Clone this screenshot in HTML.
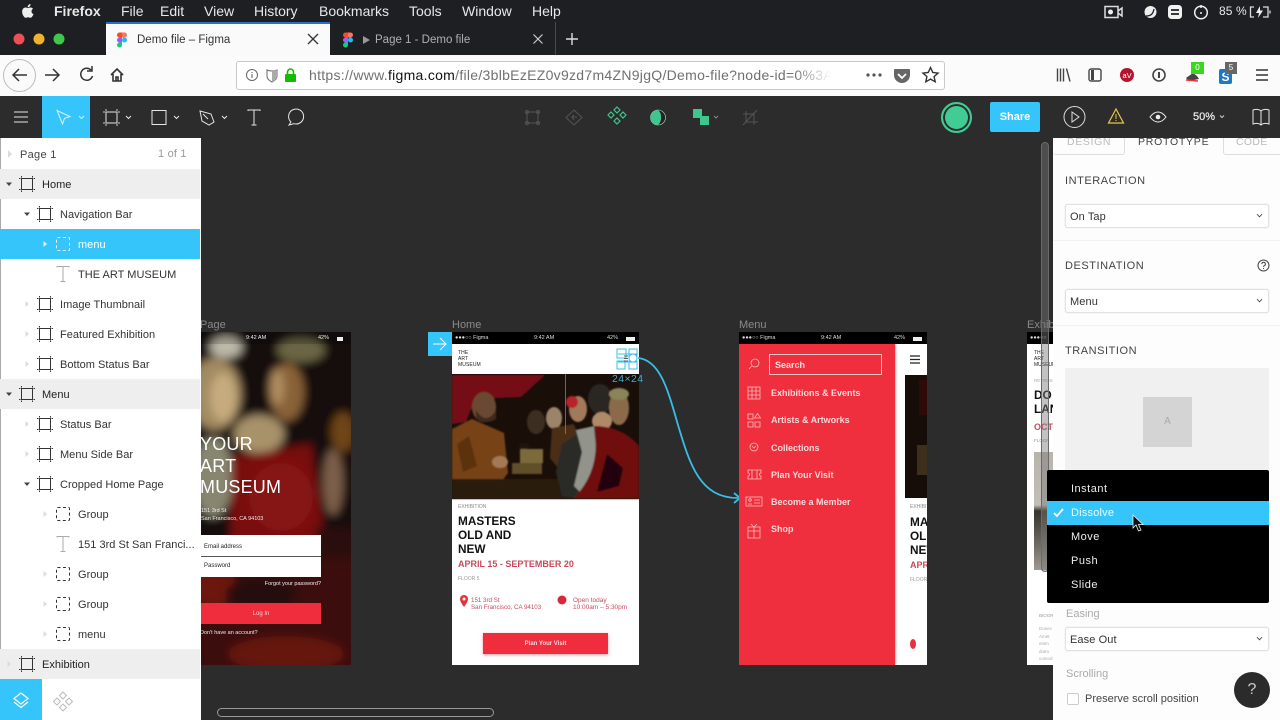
<!DOCTYPE html>
<html><head><meta charset="utf-8"><style>
*{box-sizing:border-box;margin:0;padding:0}
html,body{width:1280px;height:720px;overflow:hidden;background:#2c2c2c;font-family:"Liberation Sans",sans-serif}
.a{position:absolute;white-space:nowrap}
svg{position:absolute;overflow:visible}
.r{position:absolute;left:0;width:200px;height:30px;font-size:11px;letter-spacing:.02px;line-height:32px;color:#333;white-space:nowrap}
.r span{position:absolute}
.h{background:#eeeeef;color:#222}
.m{position:absolute;font-size:14px;color:#e8e8e8;top:3px}
.lab{position:absolute;font-size:11px;color:#8a8a8a;top:319px}
.sec{position:absolute;left:1065px;font-size:11px;letter-spacing:.55px;color:#444}
.sel{position:absolute;left:1065px;width:204px;height:24px;border:1px solid #e2e2e2;border-radius:3px;background:#fff;font-size:11px;letter-spacing:.1px;line-height:24px;padding-left:4px;color:#333;box-shadow:0 0 1px #ccc}
.sel i{position:absolute;right:6px;top:7px;width:5px;height:5px;border-right:1px solid #444;border-bottom:1px solid #444;transform:rotate(45deg) scale(.8)}
.it{position:absolute;left:1071px;font-size:11px;letter-spacing:.5px;color:#eee}
.t{position:absolute;white-space:nowrap;font-family:"Liberation Sans",sans-serif}
</style></head><body>
<!-- macOS menu -->
<div class="a" style="left:0;top:0;width:1280px;height:55px;background:#1e1f23"></div>
<svg style="left:21px;top:3px" width="14" height="16" viewBox="0 0 14 16"><path d="M10.5 8.4c0-1.7 1.4-2.5 1.5-2.6-.8-1.2-2-1.3-2.5-1.3-1-.1-2 .6-2.6.6s-1.400-.6-2.300-.6C3.400 4.500 2.300 5.200 1.700 6.200.5 8.300 1.400 11.400 2.600 13.100c.6.800 1.300 1.800 2.200 1.700.9 0 1.200-.6 2.300-.6s1.400.6 2.300.6 1.600-.8 2.100-1.700c.7-1 1-1.900 1-2-.1 0-2-.7-2-2.700zM8.800 3.300c.5-.6.800-1.400.7-2.300-.7 0-1.600.5-2.100 1.100-.5.5-.9 1.400-.8 2.200.8.100 1.700-.4 2.200-1z" fill="#eee"/></svg>
<div class="m" style="left:54px;font-weight:bold">Firefox</div>
<div class="m" style="left:121px">File</div>
<div class="m" style="left:160px">Edit</div>
<div class="m" style="left:204px">View</div>
<div class="m" style="left:254px">History</div>
<div class="m" style="left:319px">Bookmarks</div>
<div class="m" style="left:409px">Tools</div>
<div class="m" style="left:462px">Window</div>
<div class="m" style="left:532px">Help</div>
<svg style="left:1100px;top:4px" width="170" height="16" viewBox="0 0 170 16" fill="none">
<rect x="5" y="2.500" width="13" height="11" stroke="#ddd" stroke-width="1.500"/><circle cx="10.500" cy="8" r="2.500" fill="#eee"/><path d="M18 7l4-3v8l-4-3" stroke="#ddd" stroke-width="1.500"/>
<circle cx="50.500" cy="8" r="6" fill="#eee"/><path d="M46 12c5 0 7-2 8-7" stroke="#1e1f23" stroke-width="1.300"/>
<rect x="68" y="1" width="14" height="14" rx="3.500" fill="#f2f2f2"/><path d="M71 6h8M71 10h8" stroke="#1e1f23" stroke-width="1.800"/>
<circle cx="101" cy="8.500" r="6.300" stroke="#eee" stroke-width="1.500"/><path d="M101 1v3" stroke="#eee" stroke-width="1.500"/><circle cx="101" cy="9" r="1" fill="#eee"/>
</svg>
<div class="a" style="left:1219px;top:4px;font-size:12px;color:#e8e8e8;letter-spacing:.1px">85 %</div>
<svg style="left:1249px;top:5px" width="24" height="14" viewBox="0 0 24 14" fill="none"><path d="M5 2H1.500v10H5M14 2h5v10h-5M21 5.500v3" stroke="#ddd" stroke-width="1.300"/><path d="M11 1L7 8h3l-1 5 5-7.500h-3z" fill="#eee"/></svg>
<!-- tabs -->
<svg style="left:0;top:0" width="80" height="55"><circle cx="19" cy="39" r="5.500" fill="#ec4f57"/><circle cx="39" cy="39" r="5.500" fill="#f2b32c"/><circle cx="59" cy="39" r="5.500" fill="#3ec94c"/></svg>
<div class="a" style="left:106px;top:22px;width:224px;height:33px;background:#fafafa;border-top:2px solid #2a6fc4"></div>
<svg style="left:117px;top:32px" width="10" height="16" viewBox="0 0 10 15"><path d="M2.500 0H5v5H2.500a2.500 2.500 0 0 1 0-5z" fill="#f24e1e"/><path d="M5 0h2.500a2.500 2.500 0 0 1 0 5H5z" fill="#ff7262"/><path d="M2.500 5H5v5H2.500a2.500 2.500 0 0 1 0-5z" fill="#a259ff"/><circle cx="7.500" cy="7.500" r="2.500" fill="#1abcfe"/><path d="M2.500 10H5v2.500a2.500 2.500 0 1 1-2.500-2.500z" fill="#0acf83"/></svg>
<div class="a" style="left:137px;top:34px;font-size:11.500px;color:#333">Demo file – Figma</div>
<svg style="left:307px;top:33px" width="12" height="12"><path d="M1 1l10 10M11 1L1 11" stroke="#333" stroke-width="1.300"/></svg>
<svg style="left:343px;top:32px" width="10" height="16" viewBox="0 0 10 15"><path d="M2.500 0H5v5H2.500a2.500 2.500 0 0 1 0-5z" fill="#f24e1e"/><path d="M5 0h2.500a2.500 2.500 0 0 1 0 5H5z" fill="#ff7262"/><path d="M2.500 5H5v5H2.500a2.500 2.500 0 0 1 0-5z" fill="#a259ff"/><circle cx="7.500" cy="7.500" r="2.500" fill="#1abcfe"/><path d="M2.500 10H5v2.500a2.500 2.500 0 1 1-2.500-2.500z" fill="#0acf83"/></svg>
<svg style="left:363px;top:36px" width="8" height="8"><path d="M0 0l7 4-7 4z" fill="#999"/></svg>
<div class="a" style="left:375px;top:34px;font-size:11.500px;color:#b0b0b0">Page 1 - Demo file</div>
<svg style="left:533px;top:34px" width="10" height="10"><path d="M.5.5l9 9M9.500.5l-9 9" stroke="#ccc" stroke-width="1.200"/></svg>
<div class="a" style="left:555px;top:22px;width:1px;height:33px;background:#4a4a4a"></div>
<svg style="left:565px;top:32px" width="14" height="14"><path d="M7 1v12M1 7h12" stroke="#ddd" stroke-width="1.400"/></svg>
<!-- nav bar -->
<div class="a" style="left:0;top:55px;width:1280px;height:41px;background:#fbfbfb"></div>
<div class="a" style="left:3px;top:59px;width:33px;height:33px;border:1px solid #bbb;border-radius:50%;background:#fafafa"></div>
<svg style="left:0;top:55px" width="130" height="41" fill="none" stroke="#333" stroke-width="1.500"><path d="M27 20H13M19 14l-6 6 6 6M45 20h14M53 14l6 6-6 6"/><path d="M91 15a6 6 0 1 0 1.500 6M92 11v5h-5"/><path d="M111 20l6-6 6 6M113 19v7h8v-7M116 26v-4h2v4" stroke-width="1.600"/></svg>
<div class="a" style="left:236px;top:61px;width:709px;height:29px;background:#fff;border:1px solid #c9c9c9;border-radius:3px"></div>
<svg style="left:245px;top:67px" width="56" height="16" fill="none"><circle cx="7" cy="8" r="5.500" stroke="#666"/><path d="M7 7v4M7 5v1" stroke="#555"/><path d="M22 3c2 1 3.500 1 5 1 1.500 0 3-.0 5-1v6c0 3-3 5-5 6-2-1-5-3-5-6z" stroke="#666"/><path d="M27 4v11c2-1 5-3 5-6V3z" fill="#aaa"/><rect x="40" y="7" width="11" height="8" rx="1" fill="#12bc00"/><path d="M42.500 7V5a3 3 0 0 1 6 0v2" stroke="#12bc00" stroke-width="1.600"/></svg>
<div class="a" style="left:309px;top:67px;font-size:14px;letter-spacing:.29px;color:#707070;width:522px;overflow:hidden;-webkit-mask-image:linear-gradient(90deg,#000 93%,transparent)">https://www.<span style="color:#111">figma.com</span>/file/3blbEzEZ0v9zd7m4ZN9jgQ/Demo-file?node-id=0%3A1</div>
<svg style="left:865px;top:65px" width="75" height="20" fill="none"><circle cx="3" cy="10" r="1.600" fill="#555"/><circle cx="9" cy="10" r="1.600" fill="#555"/><circle cx="15" cy="10" r="1.600" fill="#555"/><path d="M30 4h14a1 1 0 0 1 1 1v5a8 8 0 0 1-16 0V5a1 1 0 0 1 1-1z" fill="#666"/><path d="M33 9l4 4 4-4" stroke="#fff" stroke-width="1.800"/><path d="M65.500 2.500l2.300 5 5.200.6-3.900 3.500 1.100 5.200-4.700-2.700-4.700 2.700 1.100-5.200-3.900-3.500 5.200-.6z" stroke="#333" stroke-width="1.400"/></svg>
<svg style="left:1050px;top:60px" width="220" height="30" fill="none">
<path d="M7.500 8.500v13M10.500 8.500v13M13.500 8.500v13M16.500 8.500l3.500 13" stroke="#444" stroke-width="1.400"/>
<rect x="39" y="9" width="12" height="12" rx="2" stroke="#444" stroke-width="1.400"/><path d="M41 10v10h3V10z" fill="#444"/>
<circle cx="77" cy="15" r="7" fill="#b3152e"/><text x="72.500" y="18" font-size="7.500" fill="#fff" font-family="Liberation Sans">aV</text>
<circle cx="109" cy="15" r="6" stroke="#444" stroke-width="1.600"/><path d="M109 12v6" stroke="#444" stroke-width="2"/>
<path d="M136 18l7-5 4 3 2 3-10 2z" fill="#444"/><path d="M136 20l12 1" stroke="#e33" stroke-width="1.500"/>
<rect x="169" y="9" width="13" height="15" rx="2" fill="#1e78c8"/><text x="171.500" y="21" font-size="12" font-weight="bold" fill="#fff" font-family="Liberation Sans">S</text>
<path d="M206 10h12M206 15h12M206 20h12" stroke="#333" stroke-width="1.600"/></svg>
<div class="a" style="left:1191px;top:62px;width:13px;height:12px;background:#39d81f;color:#fff;font-size:8px;line-height:12px;text-align:center">0</div>
<div class="a" style="left:1225px;top:62px;width:12px;height:12px;background:#666;color:#fff;font-size:8px;line-height:12px;text-align:center">5</div>
<!-- toolbar -->
<div class="a" style="left:0;top:96px;width:1280px;height:42px;background:#2c2c2c"></div>
<div class="a" style="left:42px;top:96px;width:48px;height:42px;background:#35c5fb"></div>
<svg style="left:0;top:96px" width="320" height="42" fill="none" stroke="#e6e6e6" stroke-width="1">
<path d="M14 16h14M14 21h14M14 26h14"/>
<path d="M57 14.500l13 6-5.500 1.800-2 5.700z" stroke="#d8f3ff"/><path d="M79 20l2.500 2.500L84 20" stroke="#d8f3ff"/>
<rect x="106" y="16" width="11" height="11"/><path d="M103 16h2M118 16h2M103 27h2M118 27h2M106 13v2M117 13v2M106 28v2M117 28v2" stroke="#ccc"/><path d="M126 20l2.500 2.500 2.500-2.500"/>
<rect x="152" y="14.500" width="14" height="14"/><path d="M174 20l2.500 2.500 2.500-2.500"/>
<path d="M200 15l11 3 3 8-5 3-7-4zM203 18l5 5" /><path d="M222 20l2.500 2.500 2.500-2.500"/>
<path d="M248 15v-1h12v1M254 14v15M251.500 29h5" /><path d="M289 29l2-3a7.500 7.500 0 1 1 3 1.700z"/>
</svg>
<svg style="left:520px;top:104px" width="250" height="28" fill="none">
<rect x="7" y="8" width="11" height="11" stroke="#555"/><circle cx="7" cy="8" r="1.500" stroke="#555"/><circle cx="18" cy="8" r="1.500" stroke="#555"/><circle cx="7" cy="19" r="1.500" stroke="#555"/><circle cx="18" cy="19" r="1.500" stroke="#555"/>
<path d="M54 6l8 7.500-8 7.500-8-7.500zM57 13h-5l2-2M52 13l2 3" stroke="#555"/>
<path d="M97 3l3 3-3 3-3-3zM91 8l3 3-3 3-3-3zM103 8l3 3-3 3-3-3zM97 14l3 3-3 3-3-3z" stroke="#3fc68f" stroke-width="1.200"/>
<circle cx="138" cy="13.500" r="7.500" fill="#232323" stroke="#bfead8" stroke-width=".6"/><path d="M138 6a7.500 7.500 0 0 0 0 15 9 9 0 0 0 3-7.500A9 9 0 0 0 138 6z" fill="#3fc68f"/>
<path d="M173 5h9v7h7v9h-9v-7h-7z" fill="#3fc68f"/><path d="M194 12l2 2 2-2" stroke="#888"/>
<path d="M226 7v11h12M223 10h11v11M237 6l-14 15" stroke="#555"/></svg>
<div class="a" style="left:941px;top:102px;width:31px;height:31px;border-radius:50%;background:#42cc95;border:2px solid #42cc95;box-shadow:inset 0 0 0 2px #2c2c2c"></div>
<div class="a" style="left:990px;top:102px;width:50px;height:30px;background:#35c5fb;border-radius:2px;color:#fff;font-size:11px;font-weight:bold;line-height:31px;text-align:center">Share</div>
<svg style="left:1060px;top:100px" width="220" height="36" fill="none">
<circle cx="14.500" cy="17" r="10.500" stroke="#ddd"/><path d="M12 12l7 5-7 5z" stroke="#ddd"/>
<path d="M56 9l7.500 14h-15z" stroke="#e6c84a" stroke-width="1.200"/><path d="M56 14v5M56 20v1" stroke="#e6c84a"/>
<path d="M90 17c3-4 6-5 8-5s5 1 8 5c-3 4-6 5-8 5s-5-1-8-5z" stroke="#eee"/><circle cx="98" cy="17" r="2.300" fill="#eee"/>
<path d="M160 15.500l2 2 2-2" stroke="#ccc"/>
<path d="M201 11c-2-2-5-2-8-1v14c3-1 6-1 8 1 2-2 5-2 8-1V10c-3-1-6-1-8 1zM201 11v14" stroke="#e6e6e6"/>
</svg>
<div class="a" style="left:1193px;top:111px;font-size:11px;color:#eee;-webkit-text-stroke:.2px #eee">50%</div>
<!-- canvas frames -->
<div class="lab" style="left:200px">Page</div>
<div class="lab" style="left:452px">Home</div>
<div class="lab" style="left:739px">Menu</div>
<div class="lab" style="left:1027px">Exhib</div>
<!-- login frame -->
<div class="a" style="left:201px;top:332px;width:150px;height:333px;overflow:hidden;background:#2a0c08">
<svg style="left:0;top:0" width="150" height="333"><defs><filter id="b1" x="-30%" y="-30%" width="160%" height="160%"><feGaussianBlur stdDeviation="4.500"/></filter></defs>
<g filter="url(#b1)">
<rect x="-10" y="-10" width="170" height="353" fill="#170e08"/>
<ellipse cx="25" cy="15" rx="16" ry="11" fill="#bdb9a8"/>
<ellipse cx="14" cy="62" rx="26" ry="36" fill="#a28a62"/><ellipse cx="22" cy="65" rx="13" ry="24" fill="#c6ab7e"/>
<ellipse cx="100" cy="18" rx="24" ry="12" fill="#6a6644"/>
<ellipse cx="86" cy="60" rx="17" ry="29" fill="#8a6238"/><ellipse cx="76" cy="55" rx="7" ry="18" fill="#b08e60"/>
<ellipse cx="142" cy="100" rx="12" ry="20" fill="#6e4518"/>
<ellipse cx="58" cy="102" rx="25" ry="19" fill="#a8926a"/>
<ellipse cx="12" cy="145" rx="20" ry="40" fill="#88866f"/>
<path d="M30 125L110 112L122 195L90 265L30 230z" fill="#7a0f10"/><ellipse cx="80" cy="165" rx="32" ry="34" fill="#861214"/>
<ellipse cx="132" cy="150" rx="10" ry="33" fill="#7d5f4a"/>
<rect x="115" y="195" width="40" height="145" fill="#2a0d09"/>
<rect x="-10" y="225" width="170" height="120" fill="#3a0c0a"/>
<ellipse cx="12" cy="250" rx="22" ry="26" fill="#6c1210"/><ellipse cx="60" cy="262" rx="35" ry="16" fill="#260a07"/>
<ellipse cx="85" cy="322" rx="58" ry="18" fill="#651210"/>
</g></svg>
<div class="a" style="left:0;top:0;width:150px;height:12px;background:rgba(0,0,0,.15)"></div>
<div class="t" style="left:45px;top:3px;font-size:5.500px;color:#eee">9:42 AM</div>
<div class="t" style="left:117px;top:3px;font-size:5.500px;color:#eee">42%</div>
<div class="a" style="left:136px;top:5px;width:6px;height:4px;background:#eee"></div>
<div class="t" style="left:-1px;top:102px;font-size:18px;line-height:21.500px;color:#fff;letter-spacing:.2px">YOUR<br>ART<br>MUSEUM</div>
<div class="t" style="left:0;top:176px;font-size:5.500px;line-height:7.500px;color:#eee">151 3rd St<br>San Francisco, CA 94103</div>
<div class="a" style="left:0;top:203px;width:120px;height:21px;background:#fff"></div>
<div class="a" style="left:0;top:224px;width:120px;height:21px;background:#fff;border-top:1px solid #555"></div>
<div class="t" style="left:3px;top:212px;font-size:6px;color:#222">Email address</div>
<div class="t" style="left:3px;top:231px;font-size:6px;color:#222">Password</div>
<div class="t" style="right:30px;top:249px;font-size:5.500px;color:#eee">Forgot your password?</div>
<div class="a" style="left:0;top:271px;width:120px;height:21px;background:#ef2d3d;color:#f6d0d0;font-size:6px;line-height:22px;text-align:center">Log In</div>
<div class="t" style="left:-1px;top:298px;font-size:5.500px;color:#eee">Don't have an account?</div>
</div>
<!-- home frame -->
<div class="a" style="left:428px;top:332px;width:24px;height:24px;background:#35c5fb"></div>
<svg style="left:432px;top:337px" width="16" height="14" fill="none" stroke="#fff" stroke-width="1"><path d="M1 7h13M8 1l6 6-6 6"/></svg>
<div class="a" style="left:452px;top:332px;width:187px;height:333px;background:#fff;overflow:hidden">
<div class="a" style="left:0;top:0;width:187px;height:12px;background:#000"></div>
<div class="t" style="left:3px;top:3px;font-size:5.500px;color:#ddd">●●●○○ Figma</div>
<div class="t" style="left:82px;top:3px;font-size:5.500px;color:#ddd">9:42 AM</div>
<div class="t" style="left:155px;top:3px;font-size:5.500px;color:#ddd">42%</div>
<div class="a" style="left:174px;top:4.500px;width:9px;height:4px;background:#eee"></div>
<div class="t" style="left:6px;top:18px;font-size:5px;line-height:6px;color:#222;letter-spacing:.1px">THE<br>ART<br>MUSEUM</div>
<svg style="left:0;top:42px" width="187" height="125"><defs><filter id="b2" x="-10%" y="-10%" width="120%" height="120%"><feGaussianBlur stdDeviation=".7"/></filter></defs>
<rect width="187" height="125" fill="#1a0e09"/><g filter="url(#b2)">
<path d="M0 1h93l-24 22-26 1-10 14-14-3L14 48 0 50z" fill="#751112"/>
<path d="M0 55l20-10 32 14 4 40-6 8H0z" fill="#774217"/><path d="M5 70l12-8 8 30-14 6z" fill="#5c3010"/><ellipse cx="32" cy="33" rx="12" ry="15" fill="#6b4a30"/><path d="M24 36q10 16 20 0v9q-10 6-20 0z" fill="#3e2b1e"/><ellipse cx="72" cy="72" rx="5" ry="3" fill="#1e120a"/>
<ellipse cx="102" cy="44" rx="8" ry="11" fill="#9c8468"/><ellipse cx="84" cy="48" rx="9" ry="12" fill="#3c2f22"/>
<rect x="68" y="75" width="23" height="14" fill="#7c6a3a"/><rect x="60" y="89" width="30" height="11" fill="#5e4f2c"/>
<rect x="0" y="105" width="187" height="20" fill="#2a1a10"/><ellipse cx="48" cy="88" rx="8" ry="6" fill="#a27a55"/>
<path d="M100 54l22-4 6 18-14 36-16-20z" fill="#4b2e16"/>
<ellipse cx="126" cy="35" rx="9" ry="13" fill="#a07a5a"/><ellipse cx="120" cy="28" rx="6" ry="6" fill="#b8242c"/>
<ellipse cx="148" cy="25" rx="12" ry="15" fill="#2c2622"/><ellipse cx="150" cy="47" rx="10" ry="9" fill="#b08a68"/><ellipse cx="167" cy="34" rx="10" ry="17" fill="#8a6a48"/><ellipse cx="167" cy="20" rx="10" ry="6" fill="#8a8458"/>
<path d="M110 70l-6 28 6 24 14 2 12-24-10-40z" fill="#2c2a28"/>
<path d="M124 56l18-4 4 40-18 26-6-6 8-34z" fill="#92938b"/>
<path d="M142 52Q150 95 122 124H187V72Q170 52 142 52z" fill="#700d10"/><path d="M155 80l16 14-4 18-22 6z" fill="#240608"/>
</g><path d="M113.500 0v60" stroke="#8a7d70" stroke-width=".8"/></svg>
<div class="t" style="left:6px;top:172px;font-size:5px;color:#888">EXHIBITION</div>
<div class="t" style="left:6px;top:182px;font-size:11.800px;line-height:14px;font-weight:bold;color:#111">MASTERS<br>OLD AND<br>NEW</div>
<div class="t" style="left:6px;top:227px;font-size:9px;font-weight:bold;color:#c84a5c">APRIL 15 - SEPTEMBER 20</div>
<div class="t" style="left:6px;top:244px;font-size:5px;color:#999">FLOOR 5</div>
<svg style="left:8px;top:262px" width="120" height="16"><path d="M4 1a4 4 0 0 1 4 4c0 3-4 8-4 8s-4-5-4-8a4 4 0 0 1 4-4z" fill="#e8313f"/><circle cx="4" cy="5" r="1.500" fill="#fff"/><circle cx="102" cy="6" r="4.500" fill="#d52a39"/></svg>
<div class="t" style="left:19px;top:265px;font-size:6.200px;line-height:7px;color:#c84a5c">151 3rd St<br>San Francisco, CA 94103</div>
<div class="t" style="left:121px;top:265px;font-size:6.500px;line-height:7px;color:#c84a5c">Open today<br>10:00am – 5:30pm</div>
<div class="a" style="left:31px;top:301px;width:125px;height:21px;background:#ef2d3d;box-shadow:0 1px 3px rgba(230,50,60,.5);color:#fad7d7;font-size:6px;font-weight:bold;line-height:22px;text-align:center">Plan Your Visit</div>
</div>
<!-- handle -->
<svg style="left:600px;top:340px" width="150" height="170" fill="none">
<g stroke="#39bde6" stroke-width="1" fill="#fff" fill-opacity=".15"><rect x="17" y="9" width="9" height="9"/><rect x="29" y="9" width="8" height="8"/><rect x="17" y="21" width="8" height="8"/><rect x="29" y="21" width="8" height="8"/></g>
<path d="M18 14h18v8H18" stroke="#39bde6" fill="none"/><path d="M24 16h4M24 18.500h4M24 21h4" stroke="#333" stroke-width=".8"/>
<circle cx="33" cy="18" r="4" fill="#fff" stroke="#39bde6"/>
<path d="M38 18C60 20 68 50 78 85 C90 125 100 158 138 158" stroke="#39bde6" stroke-width="1.800"/>
<path d="M134 153l6 5-6 5" stroke="#39bde6" stroke-width="1.800"/></svg>
<div class="a" style="left:612px;top:373px;font-size:10.500px;color:#3aaed6;letter-spacing:.4px">24×24</div>
<!-- menu frame -->
<div class="a" style="left:739px;top:332px;width:188px;height:333px;background:#fff;overflow:hidden">
<div class="a" style="left:0;top:0;width:188px;height:12px;background:#000"></div>
<div class="t" style="left:3px;top:3px;font-size:5.500px;color:#ddd">●●●○○ Figma</div>
<div class="t" style="left:82px;top:3px;font-size:5.500px;color:#ddd">9:42 AM</div>
<div class="t" style="left:155px;top:3px;font-size:5.500px;color:#ddd">42%</div>
<div class="a" style="left:174px;top:4.500px;width:9px;height:4px;background:#eee"></div>
<div class="a" style="left:0;top:12px;width:156px;height:321px;background:#ef2f3d;box-shadow:1px 0 2px rgba(0,0,0,.3)"></div>
<div class="a" style="left:166px;top:43px;width:22px;height:123px;background:#170d08"></div>
<svg style="left:166px;top:43px" width="22" height="123"><rect x="12" y="70" width="10" height="30" fill="#3e2f1c"/><rect x="14" y="5" width="8" height="35" fill="#2e0b09"/></svg>
<svg style="left:171px;top:23px" width="12" height="10"><path d="M0 1h10M0 4.500h10M0 8h10" stroke="#222" stroke-width="1.200"/></svg>
<div class="t" style="left:171px;top:172px;font-size:5px;color:#888">EXHIBITION</div>
<div class="t" style="left:171px;top:183px;font-size:11.800px;line-height:14px;font-weight:bold;color:#111">MASTERS<br>OLD AND<br>NEW</div>
<div class="t" style="left:171px;top:228px;font-size:9px;font-weight:bold;color:#c84a5c">APRIL</div>
<div class="t" style="left:171px;top:245px;font-size:5px;color:#999">FLOOR</div>
<div class="a" style="left:171px;top:307px;width:6px;height:10px;background:#e8313f;border-radius:50%"></div>
<div class="a" style="left:30px;top:22px;width:113px;height:21px;border:1px solid #f4c7c7;color:#f7dede;font-size:9px;font-weight:bold;line-height:20px;padding-left:5px">Search</div>
<div class="t" style="left:32px;top:56px;font-size:9px;font-weight:bold;color:#f7d9d9">Exhibitions &amp; Events</div>
<div class="t" style="left:32px;top:83px;font-size:9px;font-weight:bold;color:#f7d9d9">Artists &amp; Artworks</div>
<div class="t" style="left:32px;top:111px;font-size:9px;font-weight:bold;color:#f7d9d9">Collections</div>
<div class="t" style="left:32px;top:138px;font-size:9px;font-weight:bold;color:#f7d9d9">Plan Your Visit</div>
<div class="t" style="left:32px;top:165px;font-size:9px;font-weight:bold;color:#f7d9d9">Become a Member</div>
<div class="t" style="left:32px;top:192px;font-size:9px;font-weight:bold;color:#f7d9d9">Shop</div>
<svg style="left:0;top:12px" width="30" height="210" fill="none" stroke="#f6bcbc" stroke-width=".8">
<circle cx="16" cy="19" r="4"/><path d="M13 22l-3 3"/>
<rect x="9" y="43" width="12" height="12"/><path d="M9 47h12M9 51h12M13 43v12M17 43v12"/>
<rect x="9" y="70" width="5" height="5"/><path d="M18.500 69.500l3 4.500h-6z"/><rect x="9" y="78" width="5" height="5"/><rect x="16" y="78" width="5" height="5"/>
<circle cx="15" cy="103" r="4"/><path d="M13 102l2 2 2-2"/>
<path d="M9 126h13v3a1.500 1.500 0 0 0 0 3v3H9v-3a1.500 1.500 0 0 0 0-3zM13 126v9M18 126v9"/>
<rect x="7" y="153" width="16" height="9"/><circle cx="11" cy="156" r="1.300"/><path d="M9 160h4M15 156h6M15 159h6"/>
<rect x="9" y="183" width="12" height="11"/><path d="M9 187h12M15 183v11M12 180l3 3 3-3"/></svg>
</div>
<!-- exhibition frame -->
<div class="a" style="left:1027px;top:332px;width:26px;height:333px;background:#fff;overflow:hidden">
<div class="a" style="left:0;top:0;width:26px;height:12px;background:#000"></div>
<div class="t" style="left:3px;top:3px;font-size:5.500px;color:#ddd">●●●○○</div>
<div class="t" style="left:7px;top:18px;font-size:5px;line-height:6px;color:#222">THE<br>ART<br>MUSEUM</div>
<div class="t" style="left:7px;top:46px;font-size:4.500px;color:#aaa">RETROS</div>
<div class="t" style="left:7px;top:56px;font-size:11.800px;line-height:14px;font-weight:bold;color:#111">DO<br>LAN</div>
<div class="t" style="left:7px;top:90px;font-size:9px;font-weight:bold;color:#c84a5c">OCT</div>
<div class="t" style="left:7px;top:106px;font-size:4.500px;color:#999">FLOOR</div>
<div class="a" style="left:7px;top:120px;width:19px;height:118px;background:linear-gradient(#b8b4ac,#c2beb7 45%,#38332e 50%,#726d66 80%,#9e9a92)"></div>
<div class="t" style="left:12px;top:281px;font-size:4.500px;color:#999">BIOGR</div>
<div class="t" style="left:12px;top:293px;font-size:4.500px;line-height:7.500px;color:#aaa">Donec<br>Amet<br>enim<br>dutm<br>comod</div>
</div>
<!-- scrollbars -->
<div class="a" style="left:217px;top:708px;width:277px;height:9px;border:1px solid #9a9a9a;border-radius:5px;background:#2a2a2a"></div>
<div class="a" style="left:1041px;top:142px;width:8px;height:430px;border:1px solid #6a6a6a;border-radius:5px;background:rgba(120,120,120,.45)"></div>
<!-- left panel -->
<div class="a" style="left:0;top:138px;width:201px;height:582px;background:#fff;border-left:1px solid #aaa"></div>
<svg style="left:8px;top:150px" width="5" height="8"><path d="M0 0l4 4-4 4z" fill="#ddd"/></svg>
<div class="a" style="left:20px;top:149px;font-size:11px;letter-spacing:.3px;color:#444">Page 1</div>
<div class="a" style="left:158px;top:148px;font-size:11px;letter-spacing:.2px;color:#999">1 of 1</div>
<div id="L">
<div class="r h" style="top:169px"><span style="left:42px">Home</span></div>
<div class="r" style="top:199px"><span style="left:60px">Navigation Bar</span></div>
<div class="r" style="top:229px;background:#35c5fb;color:#fff"><span style="left:78px">menu</span></div>
<div class="r" style="top:259px"><span style="left:78px">THE ART MUSEUM</span></div>
<div class="r" style="top:289px"><span style="left:60px">Image Thumbnail</span></div>
<div class="r" style="top:319px"><span style="left:60px">Featured Exhibition</span></div>
<div class="r" style="top:349px"><span style="left:60px">Bottom Status Bar</span></div>
<div class="r h" style="top:379px"><span style="left:42px">Menu</span></div>
<div class="r" style="top:409px"><span style="left:60px">Status Bar</span></div>
<div class="r" style="top:439px"><span style="left:60px">Menu Side Bar</span></div>
<div class="r" style="top:469px"><span style="left:60px">Cropped Home Page</span></div>
<div class="r" style="top:499px"><span style="left:78px">Group</span></div>
<div class="r" style="top:529px"><span style="left:78px">151 3rd St San Franci...</span></div>
<div class="r" style="top:559px"><span style="left:78px">Group</span></div>
<div class="r" style="top:589px"><span style="left:78px">Group</span></div>
<div class="r" style="top:619px"><span style="left:78px">menu</span></div>
<div class="r h" style="top:649px"><span style="left:42px">Exhibition</span></div>
</div>
<svg style="left:0;top:0" width="201" height="720" fill="none">
<defs>
<g id="f" stroke="#333"><rect x="-5.500" y="-5.500" width="11" height="11"/><path d="M-8-5.500h1.500M6.500-5.500H8M-8 5.500h1.500M6.500 5.500H8M-5.500-8v1.500M-5.500 6.500V8M5.500-8v1.500M5.500 6.500V8"/></g>
<g id="g" stroke="#333"><rect x="-6.500" y="-6.500" width="13" height="13" rx="1" stroke-dasharray="3 2.500"/></g>
<g id="T" stroke="#aaa"><path d="M-6-6.500v-1h12v1M0-7.500V7.500M-2.500 7.500h5"/></g>
<path id="d" d="M-3-1.500h6L0 2z" fill="#444"/>
<path id="c" d="M-1.500-3L2 0l-3.500 3z" fill="#ddd"/>
</defs>
<use href="#d" x="9" y="184"/><use href="#f" x="27" y="184"/>
<use href="#d" x="27" y="214"/><use href="#f" x="45" y="214"/>
<path d="M43.500 241l3.500 3-3.500 3z" fill="#e0f6ff"/><rect x="56.500" y="237.500" width="13" height="13" rx="1" stroke="#e6f8ff" stroke-dasharray="3 2.500"/>
<use href="#T" x="63" y="274"/>
<use href="#c" x="27" y="304"/><use href="#f" x="45" y="304"/>
<use href="#c" x="27" y="334"/><use href="#f" x="45" y="334"/>
<use href="#c" x="27" y="364"/><use href="#f" x="45" y="364"/>
<use href="#d" x="9" y="394"/><use href="#f" x="27" y="394"/>
<use href="#c" x="27" y="424"/><use href="#f" x="45" y="424"/>
<use href="#c" x="27" y="454"/><use href="#f" x="45" y="454"/>
<use href="#d" x="27" y="484"/><use href="#f" x="45" y="484"/>
<use href="#c" x="45" y="514"/><use href="#g" x="63" y="514"/>
<use href="#T" x="63" y="544"/>
<use href="#c" x="45" y="574"/><use href="#g" x="63" y="574"/>
<use href="#c" x="45" y="604"/><use href="#g" x="63" y="604"/>
<use href="#c" x="45" y="634"/><use href="#g" x="63" y="634"/>
<use href="#c" x="9" y="664"/><use href="#f" x="27" y="664"/>
</svg>
<div class="a" style="left:1px;top:679px;width:200px;height:41px;background:#fff"></div>
<div class="a" style="left:0;top:679px;width:42px;height:41px;background:#35c5fb"></div>
<svg style="left:0;top:679px" width="90" height="41" fill="none"><path d="M21 14l7 5.500-7 5.500-7-5.500z" stroke="#fff" stroke-width="1.200"/><path d="M14 23l7 5.500 7-5.500" stroke="#fff" stroke-width="1.200"/>
<g stroke="#bbb"><path d="M63 13l3.500 3.500-3.500 3.500-3.500-3.500zM57 19l3.500 3.500-3.500 3.500-3.500-3.500zM69 19l3.500 3.500-3.500 3.500-3.500-3.500zM63 25l3.500 3.500-3.500 3.500-3.500-3.500z"/></g></svg>
<!-- right panel -->
<div class="a" style="left:1053px;top:138px;width:227px;height:582px;background:#fdfdfd"></div>
<div class="a" style="left:1053px;top:138px;width:72px;height:17px;border-right:1px solid #ddd;border-bottom:1px solid #ddd;border-radius:0 0 3px 3px"></div>
<div class="a" style="left:1223px;top:138px;width:57px;height:17px;border-left:1px solid #ddd;border-bottom:1px solid #ddd;border-radius:0 0 0 3px"></div>
<div class="a" style="left:1067px;top:136px;font-size:10.500px;letter-spacing:.65px;color:#bbb">DESIGN</div>
<div class="a" style="left:1138px;top:136px;font-size:10.500px;letter-spacing:.75px;color:#444">PROTOTYPE</div>
<div class="a" style="left:1236px;top:136px;font-size:10.500px;letter-spacing:.3px;color:#bbb">CODE</div>
<div class="a" style="left:1053px;top:130px;width:227px;height:8px;background:#2c2c2c"></div>
<div class="sec" style="top:175px">INTERACTION</div>
<div class="sel" style="top:204px">On Tap<i></i></div>
<div class="a" style="left:1053px;top:240px;width:227px;height:1px;background:#f2f2f2"></div>
<div class="sec" style="top:260px">DESTINATION</div>
<svg style="left:1257px;top:259px" width="13" height="13" fill="none"><circle cx="6.500" cy="6.500" r="5.500" stroke="#444"/><path d="M4.800 5a1.800 1.800 0 1 1 2.500 1.700c-.6.300-.8.600-.8 1.300M6.500 9v1" stroke="#444"/></svg>
<div class="sel" style="top:289px">Menu<i></i></div>
<div class="a" style="left:1053px;top:325px;width:227px;height:1px;background:#f2f2f2"></div>
<div class="sec" style="top:345px">TRANSITION</div>
<div class="a" style="left:1065px;top:368px;width:204px;height:102px;background:#f0f0f0"></div>
<div class="a" style="left:1143px;top:397px;width:49px;height:50px;background:#d4d4d4;color:#aaa;font-size:10px;line-height:50px;text-align:center">A</div>
<div class="a" style="left:1047px;top:470px;width:222px;height:133px;background:#000;border-radius:2px"></div>
<div class="a" style="left:1047px;top:501px;width:222px;height:24px;background:#35c5fb"></div>
<svg style="left:1053px;top:508px" width="11" height="10"><path d="M1 5l3 3 6-7" stroke="#fff" stroke-width="1.800" fill="none"/></svg>
<div class="it" style="top:483px">Instant</div>
<div class="it" style="top:507px;color:#e8fbff;letter-spacing:.2px">Dissolve</div>
<div class="it" style="top:531px">Move</div>
<div class="it" style="top:555px">Push</div>
<div class="it" style="top:579px">Slide</div>
<svg style="left:1132px;top:514px" width="13" height="19"><path d="M1 1v13l3-3 2.500 6 2.500-1-2.500-5.500h4.500z" fill="#111" stroke="#eee" stroke-width=".8"/></svg>
<div class="a" style="left:1066px;top:608px;font-size:11px;color:#aaa">Easing</div>
<div class="sel" style="top:627px">Ease Out<i></i></div>
<div class="a" style="left:1066px;top:668px;font-size:11px;color:#aaa">Scrolling</div>
<div class="a" style="left:1067px;top:693px;width:12px;height:12px;border:1px solid #ccc;border-radius:2px;background:#fff"></div>
<div class="a" style="left:1085px;top:693px;font-size:11px;color:#444">Preserve scroll position</div>
<div class="a" style="left:1234px;top:672px;width:36px;height:36px;border-radius:50%;background:#2b2b2b;color:#ccc;font-size:16px;line-height:36px;text-align:center">?</div>
</body></html>
